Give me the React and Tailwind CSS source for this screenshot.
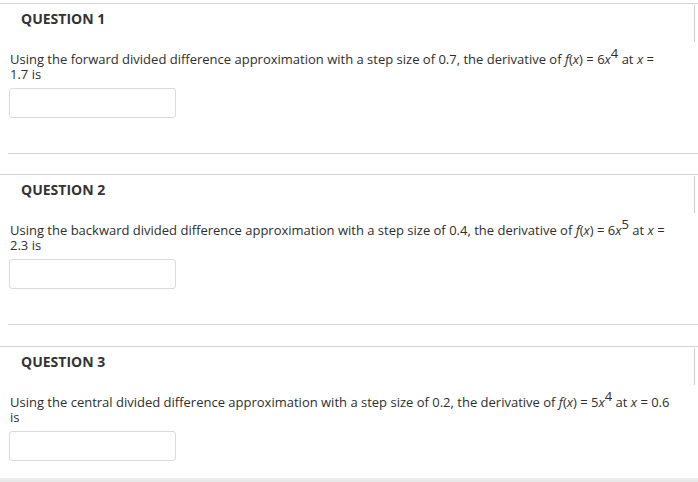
import React from 'react';

// Quiz page: three numerical-methods questions, each with an answer box.

const questions = [
  { n: 1, kind: 'forward', h: '0.7', coef: '6', pow: '4', at: '1.7' },
  { n: 2, kind: 'backward', h: '0.4', coef: '6', pow: '5', at: '2.3' },
  { n: 3, kind: 'central', h: '0.2', coef: '5', pow: '4', at: '0.6' },
];

const Question = ({ q, gap }) => (
  <div className="border-t border-[#d2d2d2]">
    {/* Header */}
    <div className="flex justify-between">
      <div className="pl-[21px] pt-[4px] text-[14px] leading-[22px] font-bold text-[#333]">
        QUESTION {q.n}
      </div>
      <div className="mt-[1px] h-[37px] w-[4px] border-l border-[#cfcfcf]" />
    </div>

    {/* Prompt */}
    <p className="mt-[10px] pl-[10px] pr-[26px] text-[13px] leading-[15px] text-[#2e2e2e]">
      Using the {q.kind} divided difference approximation with a step size of {q.h}, the derivative of{' '}
      <i>f</i>(<i>x</i>) = {q.coef}<i>x</i>
      <span className="relative -top-[6px] leading-[0]">{q.pow}</span> at <i>x</i> = {q.at} is
    </p>

    {/* Answer box */}
    <input
      type="text"
      className="block mt-[6px] ml-[9px] h-[30px] w-[167px] rounded-[3px] border border-[#dadada] bg-white outline-none"
    />

    <div className="mt-[35px] ml-[8px] border-b border-[#d2d2d2]" />
    <div className={gap} />
  </div>
);

export default function App() {
  return (
    <div className="w-[698px] h-[482px] overflow-hidden bg-white font-['Open_Sans',sans-serif]">
      <div className="pt-[3px] h-[478px] overflow-hidden">
        <Question q={questions[0]} gap="h-[20px]" />
        <Question q={questions[1]} gap="h-[21px]" />
        <Question q={questions[2]} gap="h-[20px]" />
      </div>
      <div className="h-[4px] bg-gradient-to-b from-[#f0f0f0] to-[#e6e6e6]" />
    </div>
  );
}
